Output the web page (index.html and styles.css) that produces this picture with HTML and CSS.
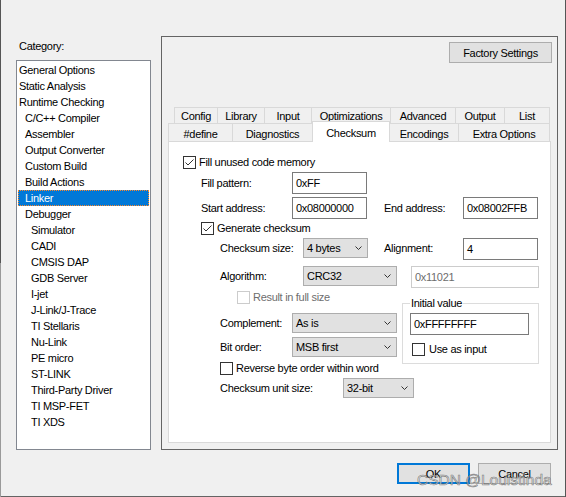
FILE: index.html
```html
<!DOCTYPE html>
<html>
<head>
<meta charset="utf-8">
<link rel="stylesheet" href="styles.css">
</head>
<body>
<div class="window">
  <div class="main">
    <div class="cat">
      <div class="cat-label">Category:</div>
      <ul class="cat-list">
        <li>General Options</li>
        <li>Static Analysis</li>
        <li>Runtime Checking</li>
        <li class="l1">C/C++ Compiler</li>
        <li class="l1">Assembler</li>
        <li class="l1">Output Converter</li>
        <li class="l1">Custom Build</li>
        <li class="l1">Build Actions</li>
        <li class="l1 sel">Linker</li>
        <li class="l1">Debugger</li>
        <li class="l2">Simulator</li>
        <li class="l2">CADI</li>
        <li class="l2">CMSIS DAP</li>
        <li class="l2">GDB Server</li>
        <li class="l2">I-jet</li>
        <li class="l2">J-Link/J-Trace</li>
        <li class="l2">TI Stellaris</li>
        <li class="l2">Nu-Link</li>
        <li class="l2">PE micro</li>
        <li class="l2">ST-LINK</li>
        <li class="l2">Third-Party Driver</li>
        <li class="l2">TI MSP-FET</li>
        <li class="l2">TI XDS</li>
      </ul>
    </div>
    <div class="panel">
      <div class="panel-top"><div class="btn factory">Factory Settings</div></div>
      <div class="tabs">
        <div class="tab-row row1">
          <div class="tab w43">Config</div>
          <div class="tab w47">Library</div>
          <div class="tab w47">Input</div>
          <div class="tab w79">Optimizations</div>
          <div class="tab w65">Advanced</div>
          <div class="tab w49">Output</div>
          <div class="tab w46">List</div>
        </div>
        <div class="tab-row row2">
          <div class="tab w64">#define</div>
          <div class="tab w80">Diagnostics</div>
          <div class="tab sel w78">Checksum</div>
          <div class="tab w69">Encodings</div>
          <div class="tab w92">Extra Options</div>
        </div>
      </div>
      <div class="page">
        <div class="row cb-row r-fill">
          <span class="cb"><svg width="11" height="11" viewBox="0 0 11 11"><path d="M1.5 5.5 L4 8 L9.5 2.5" fill="none" stroke="#333" stroke-width="1"/></svg></span>
          <span>Fill unused code memory</span>
        </div>
        <div class="row field-row ind32">
          <span class="lbl w91">Fill pattern:</span>
          <div class="edit w75">0xFF</div>
        </div>
        <div class="row field-row ind32">
          <span class="lbl w91">Start address:</span>
          <div class="edit w75">0x08000000</div>
          <span class="lbl w79 ml17">End address:</span>
          <div class="edit w75">0x08002FFB</div>
        </div>
        <div class="row cb-row ind32 mt3">
          <span class="cb"><svg width="11" height="11" viewBox="0 0 11 11"><path d="M1.5 5.5 L4 8 L9.5 2.5" fill="none" stroke="#333" stroke-width="1"/></svg></span>
          <span>Generate checksum</span>
        </div>
        <div class="row ind51 mt3">
          <span class="lbl20 w83">Checksum size:</span>
          <div class="combo w65"><span>4 bytes</span><svg class="chev" width="7" height="4" viewBox="0 0 7 4"><path d="M0.5 0.5 L3.5 3.5 L6.5 0.5" fill="none" stroke="#333"/></svg></div>
          <span class="lbl20 w79 ml16">Alignment:</span>
          <div class="edit w75">4</div>
        </div>
        <div class="row ind51 mt6">
          <span class="lbl20 w83">Algorithm:</span>
          <div class="combo w94"><span>CRC32</span><svg class="chev" width="7" height="4" viewBox="0 0 7 4"><path d="M0.5 0.5 L3.5 3.5 L6.5 0.5" fill="none" stroke="#333"/></svg></div>
          <div class="edit dis w128 ml14">0x11021</div>
        </div>
        <div class="row ind51 mt3 section">
          <div class="leftcol">
            <div class="row cb-row ml17">
              <span class="cb dis"></span>
              <span class="dis-text">Result in full size</span>
            </div>
            <div class="row mt9">
              <span class="lbl20 w72">Complement:</span>
              <div class="combo w105"><span>As is</span><svg class="chev" width="7" height="4" viewBox="0 0 7 4"><path d="M0.5 0.5 L3.5 3.5 L6.5 0.5" fill="none" stroke="#333"/></svg></div>
            </div>
            <div class="row mt4">
              <span class="lbl20 w72">Bit order:</span>
              <div class="combo w105"><span>MSB first</span><svg class="chev" width="7" height="4" viewBox="0 0 7 4"><path d="M0.5 0.5 L3.5 3.5 L6.5 0.5" fill="none" stroke="#333"/></svg></div>
            </div>
            <div class="row cb-row mt5">
              <span class="cb"></span>
              <span>Reverse byte order within word</span>
            </div>
            <div class="row mt3">
              <span class="lbl20 w123">Checksum unit size:</span>
              <div class="combo w71"><span>32-bit</span><svg class="chev" width="7" height="4" viewBox="0 0 7 4"><path d="M0.5 0.5 L3.5 3.5 L6.5 0.5" fill="none" stroke="#333"/></svg></div>
            </div>
          </div>
          <fieldset class="group">
            <legend>Initial value</legend>
            <div class="edit w119 mt3">0xFFFFFFFF</div>
            <div class="row cb-row use">
              <span class="cb"></span>
              <span>Use as input</span>
            </div>
          </fieldset>
        </div>
      </div>
    </div>
  </div>
  <div class="footer">
    <div class="btn ok">OK</div>
    <div class="btn cancel">Cancel</div>
  </div>
  <div class="watermark">CSDN @Louistinda</div>
</div>
</body>
</html>
```
FILE: styles.css
```css
* { box-sizing: border-box; }
html, body { margin: 0; padding: 0; }
body {
  font-family: "Liberation Sans", Arial, sans-serif;
  font-size: 11px;
  letter-spacing: -0.3px;
  color: #000;
  background: #f0f0f0;
}
.window {
  position: relative;
  width: 566px;
  height: 497px;
  overflow: hidden;
  background:
    linear-gradient(#555, #555) 0 0 / 1px 263px no-repeat,
    linear-gradient(#9a9a9a, #9a9a9a) 0 263px / 1px 234px no-repeat,
    linear-gradient(#555, #555) 565px 0 / 1px 497px no-repeat,
    linear-gradient(#646464, #646464) 0 496px / 566px 1px no-repeat,
    #f0f0f0;
}
.main { display: flex; height: 450px; padding-left: 16px; }

/* category */
.cat { width: 135px; margin-top: 39px; display: flex; flex-direction: column; flex: none; }
.cat-label { height: 14px; line-height: 14px; padding-left: 3px; margin-bottom: 7px; }
.cat-list {
  list-style: none; margin: 0; padding: 1px 1px 0 1px;
  height: 390px; border: 1px solid #828790; background: #fff;
}
.cat-list li { height: 16px; line-height: 16px; padding-left: 1px; white-space: nowrap; }
.cat-list li.l1 { padding-left: 7px; }
.cat-list li.l2 { padding-left: 13px; }
.cat-list li.sel {
  background: #0078d7; color: #fff;
  outline: 1px dotted #ff8728; outline-offset: -1px;
}

/* panel */
.panel {
  margin: 36px 0 0 10px; width: 397px; height: 414px;
  border: 1px solid #646464; display: flex; flex-direction: column; flex: none;
}
.panel-top { display: flex; justify-content: flex-end; padding: 5px 5px 0 0; }
.btn {
  background: #e1e1e1; border: 1px solid #adadad; height: 21px;
  display: flex; align-items: center; justify-content: center; white-space: nowrap;
}
.factory { width: 103px; }

.tabs { margin: 44px 6px 0 6px; }
.tab-row { display: flex; }
.row1 { height: 16px; padding-left: 6px; }
.row2 { height: 18px; }
.tab {
  border-top: 1px solid #d9d9d9; border-left: 1px solid #d9d9d9;
  text-align: center; white-space: nowrap; flex: none;
}
.tab:last-child { border-right: 1px solid #d9d9d9; }
.row1 .tab { height: 16px; line-height: 15px; padding-top: 1px; }
.row2 .tab { height: 18px; line-height: 16px; padding-top: 2px; }
.row2 .tab.sel {
  height: 21px; margin-top: -2px; padding-top: 2px; line-height: 18px;
  background: #fff; border-right: 1px solid #d9d9d9; position: relative; z-index: 1;
}
.tab.sel + .tab { margin-left: -1px; }

.w43 { width: 43px; } .w46 { width: 46px; } .w47 { width: 47px; } .w49 { width: 49px; }
.w64 { width: 64px; } .w65 { width: 65px; } .w69 { width: 69px; } .w71 { width: 71px; }
.w72 { width: 72px; } .w75 { width: 75px; } .w78 { width: 78px; } .w79 { width: 79px; }
.w80 { width: 80px; } .w83 { width: 83px; } .w91 { width: 91px; } .w92 { width: 92px; }
.w94 { width: 94px; } .w105 { width: 105px; } .w119 { width: 119px; } .w123 { width: 123px; }
.w128 { width: 128px; }

.page {
  margin: 0 6px; height: 302px; border: 1px solid #d9d9d9; background: #fff;
}

/* form */
.row { display: flex; align-items: flex-start; }
.cb-row { height: 13px; line-height: 13px; align-items: center; white-space: nowrap; }
.cb {
  width: 13px; height: 13px; border: 1px solid #333; background: #fff;
  flex: none; margin-right: 3px; display: block;
}
.cb svg { display: block; }
.cb.dis { border-color: #cccccc; }
.dis-text { color: #6d6d6d; }
.r-fill { margin: 14px 0 0 14px; }
.field-row { height: 22px; margin-top: 3px; }
.ind32 { padding-left: 32px; }
.ind51 { padding-left: 51px; }
.lbl { line-height: 22px; white-space: nowrap; flex: none; }
.lbl20 { line-height: 20px; white-space: nowrap; flex: none; }
.edit {
  height: 22px; line-height: 20px; border: 1px solid #7a7a7a; background: #fff;
  padding-left: 3px; flex: none; white-space: nowrap;
}
.edit.dis { border-color: #cccccc; color: #6d6d6d; }
.combo {
  height: 20px; background: #e1e1e1; border: 1px solid #adadad;
  display: flex; align-items: center; justify-content: space-between;
  padding: 0 5px 0 3px; flex: none; white-space: nowrap;
}
.chev { display: block; flex: none; }
.mt3 { margin-top: 3px; } .mt4 { margin-top: 4px; } .mt5 { margin-top: 5px; }
.mt6 { margin-top: 6px; } .mt9 { margin-top: 9px; }
.ml14 { margin-left: 14px; } .ml16 { margin-left: 16px; } .ml17 { margin-left: 17px; }

.leftcol { width: 182px; flex: none; display: flex; flex-direction: column; }
.group {
  margin: 6px 0 0 0; padding: 0 7px 7px 7px; width: 137px; min-width: 0;
  border: 1px solid #dcdcdc; flex: none;
}
.group legend { padding: 0 1px; line-height: 13px; }
.use { margin-top: 8px; margin-left: 2px; }
.use .cb { margin-right: 4px; }

/* footer */
.footer { display: flex; justify-content: flex-end; gap: 8px; padding-right: 15px; margin-top: 13px; }
.ok, .cancel { width: 73px; }
.ok { border: 2px solid #0078d7; }

.watermark {
  position: absolute; left: 417px; top: 471px;
  font-size: 15.5px; letter-spacing: 0; white-space: nowrap;
  color: rgba(240, 240, 240, 0.7);
  -webkit-text-stroke: 0.6px rgba(70, 70, 70, 0.7);
  pointer-events: none;
}
```
